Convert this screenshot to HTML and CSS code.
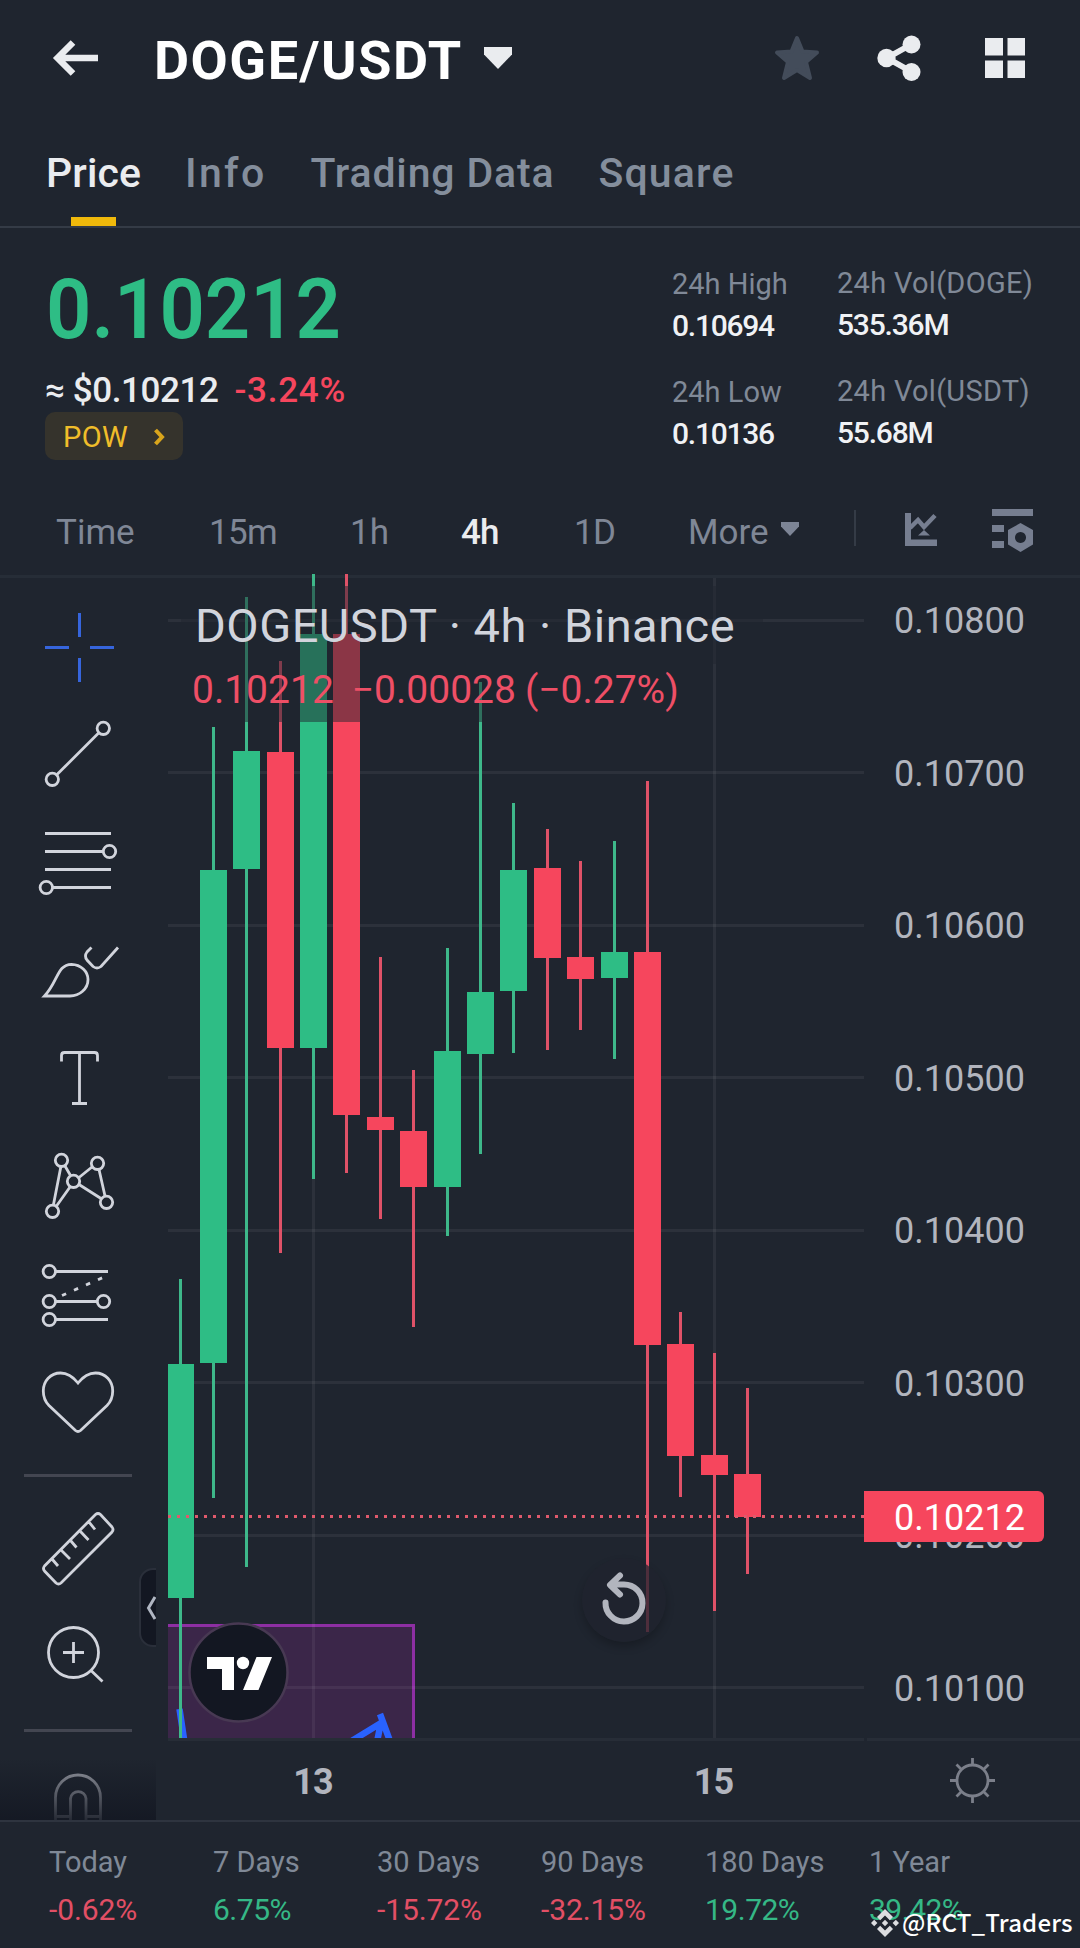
FILE: index.html
```html
<!DOCTYPE html>
<html lang="en">
<head>
<meta charset="utf-8">
<title>DOGE/USDT</title>
<link rel="stylesheet" href="styles.css">
</head>
<body>
<div class="app">
  <header class="header">
    <svg class="back" width="46" height="38" viewBox="0 0 46 38"><path d="M46 19H6M21 3.500 5.500 19 21 34.500" fill="none" stroke="#eaecef" stroke-width="6.500"/></svg>
    <h1 class="pair">DOGE/USDT</h1>
    <svg class="pair-caret" width="28" height="22" viewBox="0 0 28 22"><path d="M0 0h28v7.500L14 22 0 7.500z" fill="#eaecef"/></svg>
    <div class="actions">
      <svg width="46" height="48" viewBox="0 0 46 48"><path d="M23 4l5.500 13.500L43 18.500 32 28l4 16-13-8-13 8 4-16L3 18.500l14.500-1z" fill="#434c5a" stroke="#434c5a" stroke-width="4" stroke-linejoin="round"/></svg>
      <svg width="44" height="48" viewBox="0 0 44 48"><path d="M35 10 10 24l25 14" fill="none" stroke="#eaecef" stroke-width="6"/><circle cx="9.500" cy="24" r="9.200" fill="#eaecef"/><circle cx="34.500" cy="10.500" r="9" fill="#eaecef"/><circle cx="34.500" cy="38" r="9" fill="#eaecef"/></svg>
      <svg width="40" height="40" viewBox="0 0 40 40"><path d="M0 0h18v17.500H0zM22.500 0H40v17.500H22.500zM0 22.500h18V40H0zM22.500 22.500H40V40H22.500z" fill="#eaecef"/></svg>
    </div>
  </header>

  <nav class="tabs">
    <a class="tab active">Price</a>
    <a class="tab tab-info">Info</a>
    <a class="tab tab-data">Trading Data</a>
    <a class="tab tab-square">Square</a>
  </nav>

  <section class="quote">
    <div class="quote-main">
      <div class="last">0.10212</div>
      <div class="fiat"><span class="fiat-value">≈ $0.10212</span><span class="fiat-change">-3.24%</span></div>
      <div class="tag"><span>POW</span><svg width="11" height="18" viewBox="0 0 11 18"><path d="M1.500 2l6.500 7-6.500 7" fill="none" stroke="#d9a51c" stroke-width="4"/></svg></div>
    </div>
    <div class="stats">
      <div class="stat"><span class="label">24h High</span><span class="value">0.10694</span></div>
      <div class="stat raised"><span class="label wide">24h Vol(DOGE)</span><span class="value vol">535.36M</span></div>
      <div class="stat"><span class="label">24h Low</span><span class="value">0.10136</span></div>
      <div class="stat raised"><span class="label wide">24h Vol(USDT)</span><span class="value vol">55.68M</span></div>
    </div>
  </section>

  <div class="frames">
    <span>Time</span><span class="tight">15m</span><span>1h</span><span class="on">4h</span><span class="tight">1D</span><span>More</span>
    <svg width="18" height="14" viewBox="0 0 18 14"><path d="M0 0h18v4.500L9 14 0 4.500z" fill="#7d8596"/></svg>
    <i class="rule"></i>
    <svg class="lift" width="32" height="33" viewBox="0 0 32 33"><path d="M0 0h6v26.500h26V33H0z" fill="#767e90"/><path d="M5 15 13 7l6 7L30 2.500" fill="none" stroke="#767e90" stroke-width="4.500"/><path d="M13 22.500h12l-6-5.500z" fill="#767e90"/></svg>
    <svg class="lift" width="42" height="44" viewBox="0 0 42 44"><path d="M0 1h41v7H0zM0 17h12v7H0zM0 33h12v7H0z" fill="#767e90"/><path fill-rule="evenodd" d="M28.500 15 41 22v14.500L28.500 44 16 36.500V22zM28.500 24a5.500 5.500 0 1 0 .01 0z" fill="#767e90"/></svg>
  </div>

  <section class="workspace">
    <aside class="tools">
      <svg class="tool" viewBox="0 0 156 108"><path d="M45 53.500h24M90 53.500h24M79.500 19v24M79.500 64v24" stroke="#3665dc" stroke-width="3"/></svg>
      <svg class="tool" viewBox="0 0 156 108"><path d="M57 72.600 98.600 31"/><circle cx="103.300" cy="26.300" r="6.200"/><circle cx="52.300" cy="77.300" r="6.200"/></svg>
      <svg class="tool" viewBox="0 0 156 108"><path d="M45 23.500h66M45 41.500h58M45 59.500h66M53 77.500h58"/><circle cx="109.500" cy="41.500" r="6.200"/><circle cx="46.300" cy="77.500" r="6.200"/></svg>
      <svg class="tool" viewBox="0 0 156 108"><path d="M44.500 78C58 64 57 46.500 71.500 46.300 81 46.500 88 53.500 88 61.500 88 71 79.500 78 70 78zM91.500 29.500 87 34Q84 38 87 42l6 6.500q4 3 8 0L118 29.500"/></svg>
      <svg class="tool" viewBox="0 0 156 108"><path d="M61.500 35.500V29.500q0-3 3-3h30q3 0 3 3v6M79.500 26.500v51M72 77.500h15"/></svg>
      <svg class="tool" viewBox="0 0 156 108"><path d="M60.800 33 53.400 71M65 32l5.500 9.500M79 43.500l13-10.500M99 35.500l6 26.500M79 50.500l22 14M56.500 72l13.500-19"/><circle cx="61.500" cy="26.300" r="6.200"/><circle cx="97.500" cy="29.300" r="6.200"/><circle cx="73.500" cy="47.300" r="6.200"/><circle cx="52.500" cy="77.300" r="6.200"/><circle cx="106.500" cy="68.300" r="6.200"/></svg>
      <svg class="tool" viewBox="0 0 156 108"><path d="M56 29.500h52M56 59.500h41M56 77.500h52"/><path d="M62 53.500 104 35" stroke-dasharray="4.500 8.600"/><circle cx="49.300" cy="29.500" r="6.200"/><circle cx="49.300" cy="59.500" r="6.200"/><circle cx="103.500" cy="59.500" r="6.200"/><circle cx="49.300" cy="77.500" r="6.200"/></svg>
      <svg class="tool" viewBox="0 0 156 108"><path d="M78 33C72 25.500 67 23 60.500 23 50.500 23 43.300 31 43.300 41 43.300 47 45.500 52 49 55.500L75.500 80.500Q78 82.500 80.500 80.500L107 55.500C110.500 52 112.700 47 112.700 41 112.700 31 105.500 23 95.500 23 89 23 84 25.500 78 33z"/></svg>
      <hr>
      <svg class="tool" viewBox="0 0 156 108"><path d="M95.500 20.500q2.500-2 5 0l11.500 12.500q2 2.500 0 5L61 89q-2.500 2-5 0L44.500 77q-2-2.500 0-5zM52 65l6 7M61 56l9 9M70.500 46.500l6 7M80 37l8.500 9M89 28l6 7.500"/></svg>
      <svg class="tool" viewBox="0 0 156 108"><circle cx="73.500" cy="50.500" r="25"/><path d="M63 50.500h21M73.500 40v21M91 68.500l11.500 11"/></svg>
      <hr class="low">
      <svg class="tool magnet" viewBox="0 0 156 74"><path d="M55.500 74V51.500a22.500 22.500 0 0 1 45 0V74M70.500 74V52.500a7.800 7.800 0 0 1 15.500 0V74M55.500 70.500h15M86 70.500h15"/></svg>
      <div class="fade"></div>
      <div class="handle"><svg width="10" height="24" viewBox="0 0 10 24"><path d="M9 1 2.500 12 9 23" fill="none" stroke="#b0b6c2" stroke-width="3"/></svg></div>
    </aside>

    <div class="chart">
      <svg class="plot" width="924" height="1246" viewBox="156 574 924 1246">
        <rect x="156" y="575" width="924" height="3" fill="#262d37"/>
        <path d="M168 1624h247v114H168z" fill="#3b2649"/>
        <path d="M168 1625.500h245.500V1738" fill="none" stroke="#8d2fa3" stroke-width="3"/>
        <g stroke="#fff" stroke-opacity=".06" stroke-width="3">
          <path d="M168 620.500h696M168 772.500h696M168 925.500h696M168 1077.500h696M168 1230.500h696M168 1382.500h696M168 1535.500h696M168 1687.500h696"/>
          <path d="M313.500 578v1160M714.500 578v1160"/>
        </g>
        <path d="M168 1739.500h696M867 1739.500h213" stroke="#272d37" stroke-width="3"/>
        <svg x="168" y="1700" width="260" height="38" viewBox="168 1700 260 38">
          <path d="M179.500 1709l4.500 30M350 1742l31-19M380 1714l10 27M381 1722l-4 20" fill="none" stroke="#2962ff" stroke-width="6.500"/>
        </svg>
        <g stroke="#3eb88a" stroke-width="3">
          <path d="M180.500 1279v459M213.500 727v771M246.500 597v970M313.500 574v605M447.500 948v288M480.500 682v472M513.500 803v250M614.500 841v218"/>
        </g>
        <g stroke="#df5268" stroke-width="3">
          <path d="M280.500 661v592M346.500 574v599M380.500 957v262M413.500 1070v257M547.500 829v221M580.500 861v169M647.500 781v851M680.500 1312v185M714.500 1353v258M747.500 1388v186"/>
        </g>
        <path fill="#2ebd85" d="M168 1364h26v234h-26zM200 870h27v493h-27zM233 751h27v118h-27zM300 634h27v414h-27zM434 1051h27v136h-27zM467 992h27v62h-27zM500 870h27v121h-27zM601 952h27v26h-27z"/>
        <path fill="#f6465d" d="M267 752h27v296h-27zM333 634h27v481h-27zM367 1117h27v13h-27zM400 1131h27v56h-27zM534 868h27v90h-27zM567 957h27v22h-27zM634 952h27v393h-27zM667 1344h27v112h-27zM701 1455h27v20h-27zM734 1474h27v43h-27z"/>
        <path d="M168 1516.500h696" stroke="#df5a6c" stroke-width="3" stroke-dasharray="3 6"/>
        <g class="axis">
          <text x="894" y="633">0.10800</text>
          <text x="894" y="785.500">0.10700</text>
          <text x="894" y="938">0.10600</text>
          <text x="894" y="1090.500">0.10500</text>
          <text x="894" y="1243">0.10400</text>
          <text x="894" y="1395.500">0.10300</text>
          <text x="894" y="1548">0.10200</text>
          <text x="894" y="1701">0.10100</text>
        </g>
        <path d="M864 1491h174a6 6 0 0 1 6 6v39a6 6 0 0 1-6 6H864z" fill="#f6465d"/>
        <text class="mark" x="894" y="1530">0.10212</text>
        <text class="date" x="313" y="1794">13</text>
        <text class="date" x="713.500" y="1794">15</text>
        <g fill="none" stroke="#7b7f8a" stroke-width="2.800">
          <circle cx="972.500" cy="1780.500" r="15.500"/>
          <path d="M972.500 1765v-7M972.500 1796v7M957 1780.500h-7M988 1780.500h7M961.500 1769.500l-5-5M983.500 1769.500l5-5M961.500 1791.500l-5 5M983.500 1791.500l5 5"/>
        </g>
        <circle cx="238.500" cy="1672.500" r="49" fill="#131722" stroke="#483953" stroke-width="2.500"/>
        <path d="M207 1657h27v33h-12v-21h-15zM256.500 1657h15.500l-13.500 33h-15.500z" fill="#fff"/>
        <circle cx="243" cy="1663" r="6.200" fill="#fff"/>
      </svg>

      <div class="legend">
        <div class="symbol">DOGEUSDT · 4h · Binance</div>
        <div class="change"><span>0.10212</span><span>−0.00028</span><span>(−0.27%)</span></div>
      </div>

      <div class="reset"><svg width="84" height="84" viewBox="582 1558 84 84"><path d="M605.500 1602.500a18.500 18.500 0 1 0 18.500-18h-12M620 1575.500l-10 9.500 10 9.500" fill="none" stroke="#b2b5be" stroke-width="6" stroke-linecap="round" stroke-linejoin="round"/></svg></div>
    </div>
  </section>

  <footer class="periods">
    <div class="period"><span class="label">Today</span><span class="pct down">-0.62%</span></div>
    <div class="period"><span class="label">7 Days</span><span class="pct up">6.75%</span></div>
    <div class="period"><span class="label">30 Days</span><span class="pct down">-15.72%</span></div>
    <div class="period"><span class="label">90 Days</span><span class="pct down">-32.15%</span></div>
    <div class="period"><span class="label">180 Days</span><span class="pct up">19.72%</span></div>
    <div class="period"><span class="label">1 Year</span><span class="pct up">39.42%</span></div>
  </footer>

  <div class="watermark">
    <svg width="28" height="28" viewBox="0 0 28 28" fill="#dcdde0"><path d="M14 0l8 8-3.200 3.200L14 6.400l-4.800 4.800L6 8zM14 28l8-8-3.200-3.200L14 21.600l-4.800-4.800L6 20zM14 10.800l3.200 3.200-3.200 3.200-3.200-3.200zM3.200 10.800 6.400 14l-3.200 3.200L0 14zM24.800 10.800 28 14l-3.200 3.200-3.200-3.200z"/></svg>
    <span>@RCT_Traders</span>
  </div>
</div>
</body>
</html>
```
FILE: styles.css
```css
* { box-sizing: border-box; }
body { margin: 0; background: #1f252f; font-family: Roboto, sans-serif; color: #eaecef; }
svg { display: block; flex: none; }
.app { position: relative; width: 1080px; height: 1948px; overflow: hidden; display: flex; flex-direction: column; }

.header { display: flex; align-items: center; height: 116px; padding: 0 55px 0 52px; }
.pair { margin: 0 0 0 56px; padding-top: 5px; font-size: 54px; line-height: 60px; font-weight: 700; letter-spacing: 1.5px; color: #fff; }
.pair-caret { margin-left: 21px; }
.actions { margin-left: auto; display: flex; align-items: center; }
.actions svg + svg { margin-left: 57px; }
.actions svg:last-child { margin-left: 64px; }

.tabs { display: flex; gap: 44px; height: 112px; padding-left: 46px; border-bottom: 2px solid #343b46; }
.tab { position: relative; padding-top: 33px; font-size: 41px; line-height: 48px; font-weight: 500; color: #848e9c; letter-spacing: .12px; }
.tab.active { color: #eaecef; }
.tab.active::after { content: ""; position: absolute; left: 25px; bottom: 0; width: 45px; height: 9px; background: #f0b90b; }
.tab-info { letter-spacing: 2.3px; }
.tab-data { letter-spacing: .84px; }
.tab-square { letter-spacing: 1.19px; }

.quote { display: flex; justify-content: space-between; height: 263px; padding: 36px 46px 0 45px; }
.quote-main { padding-top: 1px; }
.last { margin-left: 1px; font-size: 84px; line-height: 90px; font-weight: 600; color: #2ebd85; transform: scaleX(.946); transform-origin: left; }
.fiat { display: flex; margin-top: 18px; font-size: 35px; line-height: 36px; font-weight: 500; white-space: nowrap; }
.fiat-value { letter-spacing: -.42px; }
.fiat-change { margin-left: 16px; letter-spacing: .74px; color: #f6465d; }
.tag { display: flex; align-items: center; justify-content: space-between; width: 138px; height: 48px; margin-top: 3px; padding: 2px 18px 0; border-radius: 10px; background: #35332c; color: #f0bd2a; font-size: 29px; letter-spacing: .38px; }
.stats { display: grid; grid-template-columns: 165px 198px; row-gap: 26px; align-content: start; margin-right: -1px; }
.stat { display: flex; flex-direction: column; gap: 2px; line-height: 40px; white-space: nowrap; }
.stat.raised { margin-top: -1px; }
.label { font-size: 29px; color: #808997; }
.label.wide { letter-spacing: .28px; }
.value { font-size: 30px; letter-spacing: -1.25px; color: #f0f2f5; }
.value.vol { letter-spacing: -1.2px; }
.stats .value { font-weight: 500; }

.frames { display: grid; grid-template-columns: 153px 141px 111px 113px 114px 93px 73px 51px 87px 42px; align-items: center; height: 83px; padding: 1px 0 0 56px; font-size: 35px; line-height: 40px; color: #7f8796; }
.frames .on { color: #eaecef; font-weight: 500; letter-spacing: -.9px; }
.frames .tight { letter-spacing: -.67px; }
.frames .lift { margin-top: -7px; }
.frames svg:nth-child(7) { margin-top: -9px; }
.rule { width: 2px; height: 36px; margin-top: -11px; background: #343b46; }

.workspace { display: grid; grid-template-columns: 156px 924px; height: 1246px; }
.tools { position: relative; margin-top: 1px; padding-top: 16px; border-top: 3px solid #262d37; overflow: hidden; }
.tool { width: 156px; height: 108px; fill: none; stroke: #d1d4dc; stroke-width: 2.8; }
.tool.magnet { height: 74px; stroke: #9a9da6; }
.tools hr { width: 108px; height: 3px; margin: 16px 24px 17px; border: 0; background: #434651; }
.tools hr.low { margin: 19px 24px 14px; }
.fade { position: absolute; left: 0; right: 0; bottom: 0; height: 62px; background: linear-gradient(rgba(19, 23, 34, 0), rgba(19, 23, 34, .85)); }
.handle { position: absolute; right: -3px; top: 990px; width: 20px; height: 79px; padding-left: 5px; display: flex; align-items: center; border: 2px solid #2a2f3a; border-radius: 14px 0 0 14px; background: #131722; }

.chart { position: relative; }
.axis text, .mark { font-size: 36px; fill: #b2b5be; }
.mark { fill: #fff; }
.date { font-size: 36px; font-weight: 700; text-anchor: middle; fill: #b2b5be; letter-spacing: -.8px; }
.legend { position: absolute; left: 25px; top: 12px; }
.symbol { width: 582px; height: 78px; padding-left: 14px; background: rgba(31, 37, 47, .5); font-size: 47px; line-height: 79px; letter-spacing: .49px; color: #d1d4dc; }
.change { display: flex; width: 510px; height: 58px; padding-left: 11px; background: rgba(31, 37, 47, .5); font-size: 39px; line-height: 52px; color: #ee4f66; }
.change span:nth-child(2) { margin: 0 9px 0 18px; }
.reset { position: absolute; left: 426px; top: 984px; width: 84px; height: 84px; border-radius: 50%; background: rgba(31, 35, 46, .76); box-shadow: 0 5px 9px rgba(0, 0, 0, .22); }

.periods { display: grid; grid-template-columns: repeat(6, 164px); flex: 1; padding: 20px 0 0 49px; border-top: 2px solid #2e343f; }
.period { display: flex; flex-direction: column; gap: 8px; line-height: 40px; }
.pct { font-size: 30px; }
.up { color: #35b886; letter-spacing: -.5px; }
.down { color: #e24f65; letter-spacing: -.1px; }

.watermark { position: absolute; left: 871px; top: 1906px; display: flex; align-items: center; gap: 3px; font: 500 24px/36px "Noto Sans CJK SC", sans-serif; letter-spacing: .18px; color: #fff; }
.watermark span { margin-top: -2px; }
```
